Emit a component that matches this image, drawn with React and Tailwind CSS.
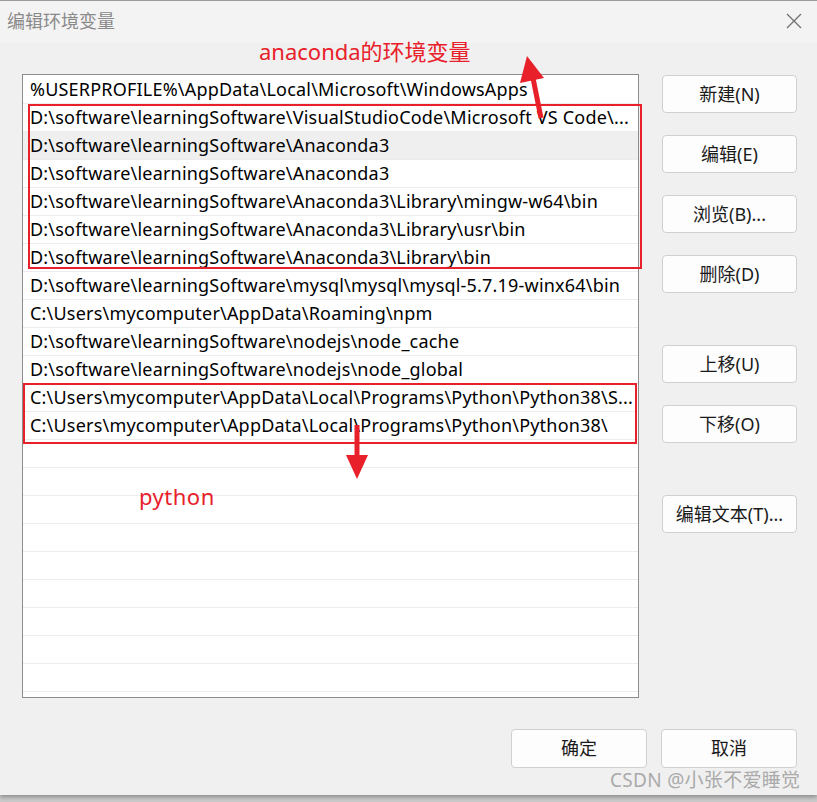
import React from "react";

const rows = [
  "%USERPROFILE%\\AppData\\Local\\Microsoft\\WindowsApps",
  "D:\\software\\learningSoftware\\VisualStudioCode\\Microsoft VS Code\\...",
  "D:\\software\\learningSoftware\\Anaconda3",
  "D:\\software\\learningSoftware\\Anaconda3",
  "D:\\software\\learningSoftware\\Anaconda3\\Library\\mingw-w64\\bin",
  "D:\\software\\learningSoftware\\Anaconda3\\Library\\usr\\bin",
  "D:\\software\\learningSoftware\\Anaconda3\\Library\\bin",
  "D:\\software\\learningSoftware\\mysql\\mysql\\mysql-5.7.19-winx64\\bin",
  "C:\\Users\\mycomputer\\AppData\\Roaming\\npm",
  "D:\\software\\learningSoftware\\nodejs\\node_cache",
  "D:\\software\\learningSoftware\\nodejs\\node_global",
  "C:\\Users\\mycomputer\\AppData\\Local\\Programs\\Python\\Python38\\S...",
  "C:\\Users\\mycomputer\\AppData\\Local\\Programs\\Python\\Python38\\",
];

const font = { fontFamily: '"Noto Sans", "Noto Sans CJK SC", sans-serif' };

function Btn({ children, className = "" }) {
  return (
    <div
      className={
        "h-[38px] w-[135px] rounded-[4px] border border-[#d0d0d0] bg-[#fdfdfd] flex items-center justify-center text-[18px] text-[#1a1a1a] " +
        className
      }
    >
      {children}
    </div>
  );
}

export default function App() {
  const all = [...rows];
  while (all.length < 22) all.push("");
  return (
    <div className="w-[817px] h-[802px] bg-[#c9c9c9] relative overflow-hidden" style={font}>
      <div className="w-[817px] h-[795px] bg-[#f0f0f0] border-t border-[#9a9a9a] flex flex-col shadow-[0_2px_4px_rgba(0,0,0,0.3)]">
        {/* title bar */}
        <div className="h-[42px] bg-[#f3f3f3] flex items-center justify-between pl-[7px] pr-[14px]">
          <span className="text-[18px] text-[#8a8a8a] -mt-[2px]">编辑环境变量</span>
          <svg width="18" height="18" viewBox="0 0 18 18" className="-mt-[2px]">
            <path d="M2 2 L16 16 M16 2 L2 16" stroke="#707070" strokeWidth="1.3" />
          </svg>
        </div>
        {/* body */}
        <div className="flex pl-[22px] pt-[31px]">
          <div className="w-[617px] h-[624px] border border-[#8c8c8c] bg-white overflow-hidden pt-[1px]">
            {all.map((t, i) => (
              <div
                key={i}
                className={
                  "h-[28px] pl-[7px] flex items-center text-[18px] tracking-[0.2px] text-black whitespace-nowrap overflow-hidden border-b border-[#ececec] " +
                  (i === 2 ? "bg-[#efefef]" : "")
                }
              >
                {t}
              </div>
            ))}
          </div>
          <div className="ml-[23px] flex flex-col pt-[1px]">
            <Btn>新建(N)</Btn>
            <Btn className="mt-[22px]">编辑(E)</Btn>
            <Btn className="mt-[22px]">浏览(B)...</Btn>
            <Btn className="mt-[22px]">删除(D)</Btn>
            <Btn className="mt-[52px]">上移(U)</Btn>
            <Btn className="mt-[22px]">下移(O)</Btn>
            <Btn className="mt-[52px]">编辑文本(T)...</Btn>
          </div>
        </div>
        <div className="flex justify-end gap-[14px] pr-[20px] mt-[31px]">
          <Btn className="h-[39px] w-[136px]">确定</Btn>
          <Btn className="h-[39px] w-[136px]">取消</Btn>
        </div>
      </div>

      {/* watermark */}
      <div className="absolute left-[610px] top-[766px] text-[19px] tracking-[0.3px] text-[#aaaaaa] whitespace-nowrap">
        CSDN @小张不爱睡觉
      </div>

      {/* annotations */}
      <div className="absolute left-[28px] top-[104px] w-[614px] h-[165px] border-2 border-[#e8202a]" />
      <div className="absolute left-[23px] top-[383px] w-[614px] h-[61px] border-2 border-[#e8202a]" />
      <div className="absolute left-[259px] top-[35px] text-[22px] text-[#e8202a] whitespace-nowrap">
        anaconda的环境变量
      </div>
      <div className="absolute left-[139px] top-[480px] text-[22px] tracking-[0.5px] text-[#e8202a]">python</div>
      <svg className="absolute left-0 top-0" width="817" height="802" viewBox="0 0 817 802">
        <path d="M541 118 L533 78" stroke="#e8202a" strokeWidth="5" />
        <path d="M527 56 L520 83 L544 78 Z" fill="#e8202a" />
        <path d="M357 425 L357 458" stroke="#e8202a" strokeWidth="5" />
        <path d="M357 479 L346 455 L368 455 Z" fill="#e8202a" />
      </svg>
    </div>
  );
}
